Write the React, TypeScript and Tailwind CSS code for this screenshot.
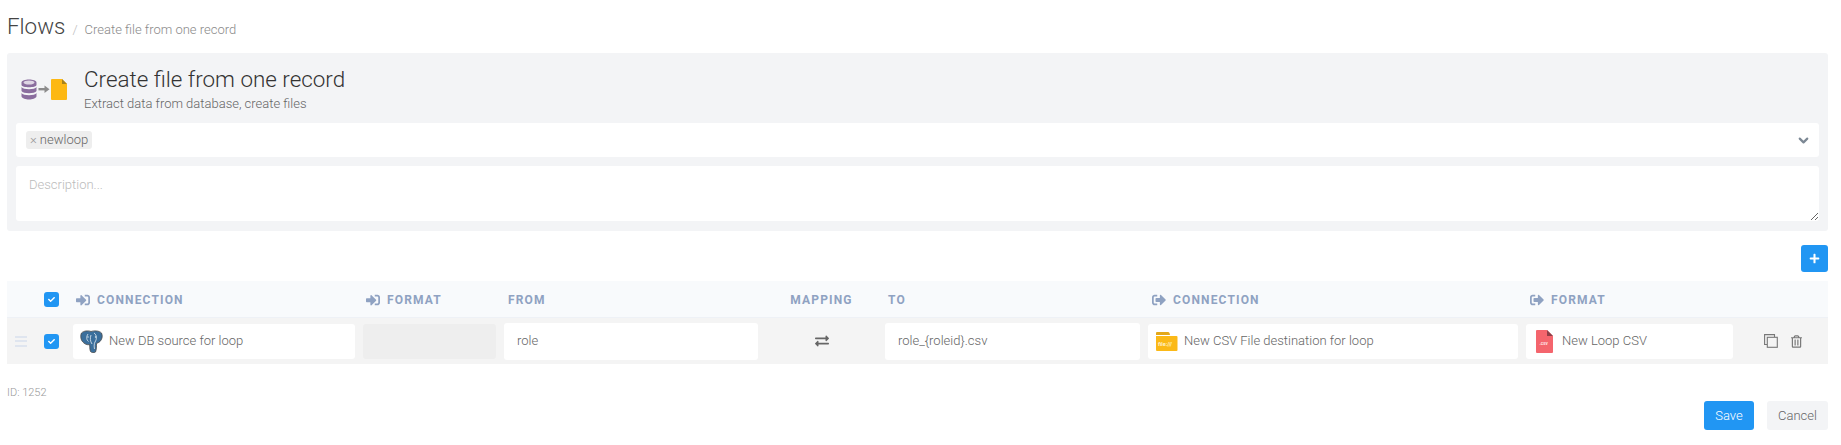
import { FaSignInAlt, FaSignOutAlt, FaPlus, FaExchangeAlt, FaRegTrashAlt, FaCheck } from "react-icons/fa";
import { ChevronDown } from "lucide-react";

function Check() {
    return (
        <div className="w-[15px] h-[15px] rounded-[3px] bg-[#2196f3] flex items-center justify-center">
            <FaCheck className="text-white w-[7px] h-[7px]" />
        </div>
    );
}

function FlowIcon() {
    return (
        <svg width="46" height="21" viewBox="0 0 46 21" className="shrink-0">
            <path d="M0.5 3.5 C0.5 -0.5 15.5 -0.5 15.5 3.500 V6 C15.5 9 0.5 9 0.5 6 Z" fill="#8a6d9e" />
            <path d="M0.5 8 C2 11 14 11 15.5 8 V12 C14 15 2 15 0.5 12 Z" fill="#8a6d9e" />
            <path d="M0.5 14 C2 17 14 17 15.5 14 V17.500 C14 21.500 2 21.500 0.5 17.500 Z" fill="#8a6d9e" />
            <ellipse cx="8" cy="3.500" rx="5.500" ry="2" fill="#ded5e4" />
            <rect x="17.500" y="9" width="7.500" height="2.400" fill="#8c8c8c" />
            <path d="M23.500 6.500 L28.500 10.200 L23.500 14 Z" fill="#8c8c8c" />
            <path d="M31 0 H41 L46 5 V20 Q46 21 45 21 H31 Q30 21 30 20 V1 Q30 0 31 0 Z" fill="#fdb813" />
            <path d="M41 0 L46 5 H41 Z" fill="#a8821c" />
        </svg>
    );
}

function PostgresIcon() {
    return (
        <svg width="23" height="23" viewBox="0 0 23 23" className="shrink-0">
            <path d="M1.500 3 C4 0.500 8.500 0.500 11 1.500 C14 0.500 19 0.500 21.500 3 C23 6 22 9.500 20 11.500 C19 12.500 17.500 13 16.500 13.500 C16.500 16.500 16.500 19.500 15.500 22 C14 23 11.500 23 10.500 21.500 C9.500 19 10 16.500 9.500 14.500 C6.500 15.500 3 13 1.500 10 C0.500 7.500 0.500 5 1.500 3 Z" fill="#3b6f9c" stroke="#4a4a4a" strokeWidth="0.800" />
            <path d="M8 4 C6 7 6.500 10 8.500 11.500 M14 3 C17 5 17 9 15 12 C14 14 14 16 14.500 19 M11 5 C10 8 10 11 12 14" fill="none" stroke="#e6edf3" strokeWidth="0.800" />
            <circle cx="8" cy="7" r="0.700" fill="#e6edf3" />
            <circle cx="15.500" cy="7" r="0.700" fill="#e6edf3" />
        </svg>
    );
}

function FolderIcon() {
    return (
        <svg width="22" height="19" viewBox="0 0 22 19" className="shrink-0">
            <path d="M0 1 Q0 0 1 0 H12 Q13 0 13.500 1 L14 3 H0 Z" fill="#e3a81a" />
            <path d="M0 4 H20.500 Q21.500 4 21.500 5 V18 Q21.500 19 20.500 19 H1 Q0 19 0 18 Z" fill="#fbb917" />
            <text x="2" y="13.500" fontSize="5.500" fontWeight="700" fill="#fff2c8" fontFamily="Roboto, sans-serif">file:///</text>
        </svg>
    );
}

function CsvIcon() {
    return (
        <svg width="17" height="23" viewBox="0 0 17 23" className="shrink-0">
            <path d="M1 0 H11 L17 6 V22 Q17 23 16 23 H1 Q0 23 0 22 V1 Q0 0 1 0 Z" fill="#f4656d" />
            <path d="M11 0 L17 6 H11 Z" fill="#8e3f48" />
            <text x="3.500" y="14.500" fontSize="4.500" fontWeight="700" fill="#ffe3e5" fontFamily="Roboto, sans-serif">.csv</text>
        </svg>
    );
}

function CopyIcon() {
    return (
        <svg width="14" height="14" viewBox="0 0 14 14" fill="none" stroke="#777" strokeWidth="1.100" className="shrink-0">
            <path d="M3 10.500 H0.600 V0.600 H10.500 V3" />
            <rect x="3.300" y="3.300" width="10" height="10" />
        </svg>
    );
}

function HeaderLabel({ icon, label }: { icon?: "in" | "out"; label: string }) {
    return (
        <div className="flex items-center pt-[2px] text-[12px] font-bold tracking-[1.150px] text-[#8fa2c2]">
            {icon === "in" && <FaSignInAlt className="w-[14px] h-[14px] mr-[7px]" />}
            {icon === "out" && <FaSignOutAlt className="w-[14px] h-[14px] mr-[7px]" />}
            {label}
        </div>
    );
}

const gridCols = "grid grid-cols-[30px_32px_290px_141px_262px_119px_263px_378px_215px_91px]";

export default function App() {
    return (
        <div className="h-[445px] bg-white pl-[7px] pr-[13px] font-['Roboto',sans-serif] font-light text-[13px] text-[#666]">
            <div className="flex items-baseline h-[53px] pt-[10px]">
                <span className="text-[22.400px] text-[#444] leading-[32px]">Flows</span>
                <span className="text-[#bbb] text-[13px] ml-[7px] mr-[7px]">/</span>
                <span className="text-[13px] text-[#8a8a8a]">Create file from one record</span>
            </div>

            <div className="bg-[#f3f4f6] rounded-[3px] h-[178px] pt-[11px] pl-[9px] pr-[9px]">
                <div className="flex items-start h-[59px]">
                    <div className="pl-[5px] mr-[17px] pt-[15px]">
                        <FlowIcon />
                    </div>
                    <div>
                        <div className="text-[22.400px] text-[#333] leading-[30px]">Create file from one record</div>
                        <div className="text-[13px] leading-[18px] mt-[1px] text-[#666]">Extract data from database, create files</div>
                    </div>
                </div>
                <div className="bg-white rounded-[3px] h-[34px] flex items-center justify-between pl-[10px] pr-[8px]">
                    <span className="flex items-center bg-[#eee] rounded-[3px] h-[18px] px-[4px] text-[13px]">
                        <span className="text-[#999] mr-[3px]">×</span>newloop
                    </span>
                    <ChevronDown className="w-[15px] h-[15px] text-[#7c8894]" strokeWidth={3.500} />
                </div>
                <textarea
                    placeholder="Description..."
                    className="block w-full h-[55px] mt-[9px] bg-white rounded-[3px] px-[13px] py-[9px] text-[13px] outline-none placeholder:text-[#bbb]"
                />
            </div>

            <div className="flex justify-end pt-[14px] pb-[9px]">
                <button className="w-[27px] h-[27px] bg-[#2196f3] rounded-[3px] flex items-center justify-center">
                    <FaPlus className="text-white w-[11px] h-[11px]" />
                </button>
            </div>

            <div className={`${gridCols} h-[37px] items-center bg-[#f8fafc] border-b border-[#eef1f6]`}>
                <div />
                <div className="pl-[7px]"><Check /></div>
                <div className="pl-[7px]"><HeaderLabel icon="in" label="CONNECTION" /></div>
                <div className="pl-[7px]"><HeaderLabel icon="in" label="FORMAT" /></div>
                <div className="pl-[8px]"><HeaderLabel label="FROM" /></div>
                <div className="flex justify-center"><HeaderLabel label="MAPPING" /></div>
                <div className="pl-[7px]"><HeaderLabel label="TO" /></div>
                <div className="pl-[8px]"><HeaderLabel icon="out" label="CONNECTION" /></div>
                <div className="pl-[8px]"><HeaderLabel icon="out" label="FORMAT" /></div>
                <div />
            </div>

            <div className={`${gridCols} h-[46px] items-center bg-[#f4f4f4]`}>
                <div className="pl-[8px] flex flex-col gap-[2.500px] pr-[10px]">
                    <div className="h-[2px] bg-[#dfe5ef]" />
                    <div className="h-[2px] bg-[#dfe5ef]" />
                    <div className="h-[2px] bg-[#dfe5ef]" />
                </div>
                <div className="pl-[7px]"><Check /></div>
                <div className="px-[4px]">
                    <div className="h-[35px] bg-white rounded-[3px] flex items-center pl-[7px] gap-[6px]">
                        <PostgresIcon />
                        <span>New DB source for loop</span>
                    </div>
                </div>
                <div className="px-[4px]">
                    <div className="h-[35px] bg-[#eee] rounded-[3px]" />
                </div>
                <div className="px-[4px]">
                    <div className="h-[37px] bg-white rounded-[3px] flex items-center pl-[13px] text-[13px]">role</div>
                </div>
                <div className="flex justify-center">
                    <FaExchangeAlt className="w-[14px] h-[14px] text-[#666]" />
                </div>
                <div className="px-[4px]">
                    <div className="h-[37px] bg-white rounded-[3px] flex items-center pl-[13px]">role_{"{roleid}"}.csv</div>
                </div>
                <div className="px-[4px]">
                    <div className="h-[35px] bg-white rounded-[3px] flex items-center pl-[8px] gap-[6px]">
                        <FolderIcon />
                        <span>New CSV File destination for loop</span>
                    </div>
                </div>
                <div className="px-[4px]">
                    <div className="h-[35px] bg-white rounded-[3px] flex items-center pl-[10px] gap-[9px]">
                        <CsvIcon />
                        <span>New Loop CSV</span>
                    </div>
                </div>
                <div className="flex items-center pl-[27px] gap-[13px]">
                    <CopyIcon />
                    <FaRegTrashAlt className="w-[11px] h-[13px] text-[#777]" />
                </div>
            </div>

            <div className="pt-[22px] text-[11px] leading-[14px] text-[#999]">ID: 1252</div>

            <div className="flex justify-end gap-[13px] pt-[1px]">
                <button className="w-[50px] h-[29px] bg-[#2196f3] rounded-[3px] text-white text-[13px]">Save</button>
                <button className="w-[61px] h-[29px] bg-[#f3f4f6] rounded-[3px] text-[#666] text-[13px]">Cancel</button>
            </div>
        </div>
    );
}
